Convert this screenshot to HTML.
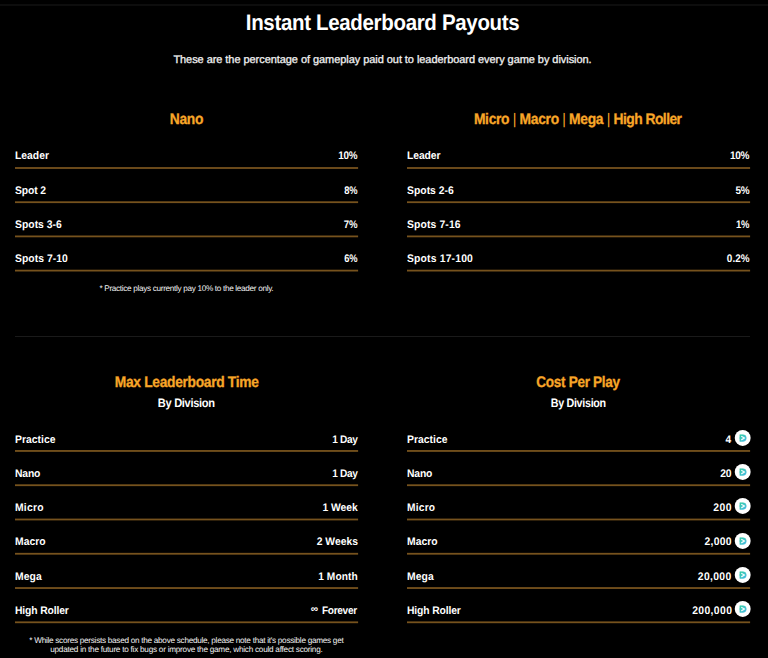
<!DOCTYPE html>
<html lang="en">
<head>
<meta charset="utf-8">
<title>Instant Leaderboard Payouts</title>
<style>
html,body{margin:0;padding:0;background:#000;}
body{width:768px;height:658px;overflow:hidden;position:relative;color:#fff;
  font-family:"Liberation Sans",Arial,sans-serif;text-rendering:geometricPrecision;}
span{white-space:nowrap;}
.topline{position:absolute;left:0;top:4px;width:768px;height:2px;background:#0d0d0d;}
.c{position:absolute;margin:0;text-align:center;white-space:nowrap;}
.full{left:0;width:765px;}
.cl{left:15px;width:343px;}
.cr{left:407px;width:343px;}
h1.c{top:9.8px;font-size:22.4px;line-height:26px;font-weight:bold;}
.sub{top:53.3px;font-size:11px;line-height:14px;color:#f0f0f0;-webkit-text-stroke:0.3px #f0f0f0;}
h2.c{color:#f8a628;-webkit-text-stroke:0.3px #f8a628;text-rendering:geometricPrecision;font-size:15.3px;line-height:18px;font-weight:bold;}
h3.c{color:#fff;font-size:12.2px;line-height:16px;font-weight:bold;}
.tbl{position:absolute;width:343px;list-style:none;margin:0;padding:0;}
.tbl li{display:flex;justify-content:space-between;align-items:flex-start;box-sizing:border-box;height:34.25px;padding-top:15.9px;border-bottom:2px solid transparent;font-size:11px;line-height:13px;font-weight:bold;}
.tbl .v{display:flex;align-items:flex-start;}
.hrl{letter-spacing:-0.6px;}
.pp{font-weight:normal;-webkit-text-stroke:0;position:relative;top:-0.5px;}
.inf{display:inline-block;font-size:10px;font-weight:bold;margin:-2.1px 0.8px 0 0;}
.coin{display:block;margin:-3.75px -2px 0 3px;flex:none;}
.note{font-size:8.2px;line-height:10px;color:#f2f2f2;text-rendering:geometricPrecision;}
.lines{position:absolute;left:0;top:0;fill:#76521d;pointer-events:none;}
.hr{position:absolute;left:15px;top:336px;width:735px;height:1px;background:#1a1a1a;}
</style>
</head>
<body>
<svg width="0" height="0" style="position:absolute"><defs><linearGradient id="cg" gradientUnits="userSpaceOnUse" x1="9" y1="9" x2="24" y2="23"><stop offset="0" stop-color="#32cf9f"/><stop offset="1" stop-color="#4ab8ea"/></linearGradient></defs></svg>
<div class="topline"></div>
<h1 class="c full"><span id="t41" style="letter-spacing:-0.350px;margin-right:0.350px;display:inline-block;transform:scaleX(0.9147);transform-origin:center center">Instant Leaderboard Payouts</span></h1>
<p class="c full sub"><span id="t42" style="letter-spacing:-0.059px;margin-right:0.059px">These are the percentage of gameplay paid out to leaderboard every game by division.</span></p>

<h2 class="c cl" style="top:111.4px"><span id="t43" style="letter-spacing:-0.350px;margin-right:0.350px;display:inline-block;transform:scaleX(0.9020);transform-origin:center center">Nano</span></h2>
<ul class="tbl nano" style="left:15px;top:134.40px">
<li><span id="t0" class="k" style="letter-spacing:0.013px;margin-right:-0.013px;display:inline-block;transform:scaleX(0.9400);transform-origin:left center">Leader</span><span class="v"><span id="t1" class="n" style="letter-spacing:-0.350px;margin-right:0.350px;display:inline-block;transform:translateX(-0.84px) scaleX(0.8987);transform-origin:right center">10%</span></span></li>
<li><span id="t2" class="k" style="letter-spacing:-0.119px;margin-right:0.119px;display:inline-block;transform:scaleX(0.9400);transform-origin:left center">Spot 2</span><span class="v"><span id="t3" class="n" style="letter-spacing:-0.350px;margin-right:0.350px;display:inline-block;transform:scaleX(0.8479);transform-origin:right center">8%</span></span></li>
<li><span id="t4" class="k" style="letter-spacing:0.040px;margin-right:-0.040px;display:inline-block;transform:scaleX(0.9400);transform-origin:left center">Spots 3-6</span><span class="v"><span id="t5" class="n" style="letter-spacing:-0.350px;margin-right:0.350px;display:inline-block;transform:scaleX(0.8771);transform-origin:right center">7%</span></span></li>
<li><span id="t6" class="k" style="letter-spacing:0.054px;margin-right:-0.054px;display:inline-block;transform:scaleX(0.9400);transform-origin:left center">Spots 7-10</span><span class="v"><span id="t7" class="n" style="letter-spacing:-0.350px;margin-right:0.350px;display:inline-block;transform:scaleX(0.8479);transform-origin:right center">6%</span></span></li>
</ul>
<p class="c cl note" style="top:283.7px"><span id="t49" style="letter-spacing:-0.317px;margin-right:0.317px">* Practice plays currently pay 10% to the leader only.</span></p>

<h2 class="c cr" style="top:111.4px"><span id="t44" style="letter-spacing:-0.350px;margin-right:0.350px;display:inline-block;transform:translateX(-1.00px) scaleX(0.9050);transform-origin:center center">Micro <span class="pp">|</span> Macro <span class="pp">|</span> Mega <span class="pp">|</span> <span class="hrl">High Roller</span></span></h2>
<ul class="tbl micro" style="left:407px;top:134.40px">
<li><span id="t8" class="k" style="letter-spacing:-0.094px;margin-right:0.094px;display:inline-block;transform:scaleX(0.9400);transform-origin:left center">Leader</span><span class="v"><span id="t9" class="n" style="letter-spacing:-0.309px;margin-right:0.309px;display:inline-block;transform:translateX(-0.84px) scaleX(0.9131);transform-origin:right center">10%</span></span></li>
<li><span id="t10" class="k" style="letter-spacing:0.040px;margin-right:-0.040px;display:inline-block;transform:scaleX(0.9400);transform-origin:left center">Spots 2-6</span><span class="v"><span id="t11" class="n" style="letter-spacing:-0.350px;margin-right:0.350px;display:inline-block;transform:scaleX(0.9073);transform-origin:right center">5%</span></span></li>
<li><span id="t12" class="k" style="letter-spacing:0.149px;margin-right:-0.149px;display:inline-block;transform:scaleX(0.9400);transform-origin:left center">Spots 7-16</span><span class="v"><span id="t13" class="n" style="letter-spacing:-0.350px;margin-right:0.350px;display:inline-block;transform:scaleX(0.8626);transform-origin:right center">1%</span></span></li>
<li><span id="t14" class="k" style="letter-spacing:0.201px;margin-right:-0.201px;display:inline-block;transform:scaleX(0.9400);transform-origin:left center">Spots 17-100</span><span class="v"><span id="t15" class="n" style="letter-spacing:0.071px;margin-right:-0.071px;display:inline-block;transform:translateX(-0.68px) scaleX(0.9024);transform-origin:right center">0.2%</span></span></li>
</ul>

<div class="hr"></div>
<svg class="lines" width="768" height="658" viewBox="0 0 768 658" aria-hidden="true"><rect x="15" y="167.10" width="343.1" height="1.8"/><rect x="15" y="201.30" width="343.1" height="1.8"/><rect x="15" y="235.50" width="343.1" height="1.8"/><rect x="15" y="269.70" width="343.1" height="1.8"/><rect x="15" y="450.05" width="343.1" height="1.8"/><rect x="15" y="484.32" width="343.1" height="1.8"/><rect x="15" y="518.59" width="343.1" height="1.8"/><rect x="15" y="552.86" width="343.1" height="1.8"/><rect x="15" y="587.13" width="343.1" height="1.8"/><rect x="15" y="621.40" width="343.1" height="1.8"/><rect x="407" y="167.10" width="343.1" height="1.8"/><rect x="407" y="201.30" width="343.1" height="1.8"/><rect x="407" y="235.50" width="343.1" height="1.8"/><rect x="407" y="269.70" width="343.1" height="1.8"/><rect x="407" y="450.05" width="343.1" height="1.8"/><rect x="407" y="484.32" width="343.1" height="1.8"/><rect x="407" y="518.59" width="343.1" height="1.8"/><rect x="407" y="552.86" width="343.1" height="1.8"/><rect x="407" y="587.13" width="343.1" height="1.8"/><rect x="407" y="621.40" width="343.1" height="1.8"/></svg>

<h2 class="c cl" style="top:373.8px"><span id="t45" style="letter-spacing:-0.350px;margin-right:0.350px;display:inline-block;transform:scaleX(0.9018);transform-origin:center center">Max Leaderboard Time</span></h2>
<h3 class="c cl" style="top:395.3px"><span id="t46" style="letter-spacing:-0.350px;margin-right:0.350px;display:inline-block;transform:scaleX(0.9092);transform-origin:center center">By Division</span></h3>
<ul class="tbl time" style="left:15px;top:417.85px">
<li><span id="t16" class="k" style="letter-spacing:0.043px;margin-right:-0.043px;display:inline-block;transform:scaleX(0.9400);transform-origin:left center">Practice</span><span class="v"><span id="t17" class="n" style="letter-spacing:-0.350px;margin-right:0.350px;display:inline-block;transform:scaleX(0.9196);transform-origin:right center">1 Day</span></span></li>
<li><span id="t18" class="k" style="letter-spacing:-0.149px;margin-right:0.149px;display:inline-block;transform:scaleX(0.9400);transform-origin:left center">Nano</span><span class="v"><span id="t19" class="n" style="letter-spacing:-0.350px;margin-right:0.350px;display:inline-block;transform:scaleX(0.9196);transform-origin:right center">1 Day</span></span></li>
<li><span id="t20" class="k" style="letter-spacing:0.250px;margin-right:-0.250px;display:inline-block;transform:scaleX(0.9400);transform-origin:left center">Micro</span><span class="v"><span id="t21" class="n" style="letter-spacing:-0.068px;margin-right:0.068px;display:inline-block;transform:translateX(-0.64px) scaleX(0.9400);transform-origin:right center">1 Week</span></span></li>
<li><span id="t22" class="k" style="letter-spacing:0.048px;margin-right:-0.048px;display:inline-block;transform:scaleX(0.9400);transform-origin:left center">Macro</span><span class="v"><span id="t23" class="n" style="letter-spacing:0.043px;margin-right:-0.043px;display:inline-block;transform:scaleX(0.9400);transform-origin:right center">2 Weeks</span></span></li>
<li><span id="t24" class="k" style="letter-spacing:0.121px;margin-right:-0.121px;display:inline-block;transform:scaleX(0.9400);transform-origin:left center">Mega</span><span class="v"><span id="t25" class="n" style="letter-spacing:0.110px;margin-right:-0.110px;display:inline-block;transform:scaleX(0.9262);transform-origin:right center">1 Month</span></span></li>
<li><span id="t26" class="k" style="letter-spacing:-0.134px;margin-right:0.134px;display:inline-block;transform:scaleX(0.9400);transform-origin:left center">High Roller</span><span class="v"><span id="t27" class="inf" style="display:inline-block;transform:translateX(-0.96px) scaleX(1.0286);transform-origin:right center">∞</span><span id="t28" class="n" style="letter-spacing:-0.350px;margin-right:0.350px;display:inline-block;transform:translateX(-1.12px) scaleX(0.9173);transform-origin:right center">Forever</span></span></li>
</ul>
<p class="c cl note" style="top:635.7px"><span id="t50" style="letter-spacing:-0.275px;margin-right:0.275px">* While scores persists based on the above schedule, please note that it's possible games get</span></p>
<p class="c cl note" style="top:644.9px"><span id="t51" style="letter-spacing:-0.247px;margin-right:0.247px">updated in the future to fix bugs or improve the game, which could affect scoring.</span></p>

<h2 class="c cr" style="top:373.8px"><span id="t47" style="letter-spacing:-0.350px;margin-right:0.350px;display:inline-block;transform:scaleX(0.8870);transform-origin:center center">Cost Per Play</span></h2>
<h3 class="c cr" style="top:395.3px"><span id="t48" style="letter-spacing:-0.350px;margin-right:0.350px;display:inline-block;transform:scaleX(0.8822);transform-origin:center center">By Division</span></h3>
<ul class="tbl cost" style="left:407px;top:417.85px">
<li><span id="t29" class="k" style="letter-spacing:0.043px;margin-right:-0.043px;display:inline-block;transform:scaleX(0.9400);transform-origin:left center">Practice</span><span class="v"><span id="t30" class="n" style="display:inline-block;transform:scaleX(0.9286);transform-origin:right center">4</span><svg class="coin" viewBox="0 0 36 32" width="18" height="16" aria-hidden="true"><g transform="translate(1.4 -0.1)"><circle cx="16" cy="16" r="15.9" fill="#fff"/><path d="M10.3 9.5h6.2a6.7 6.7 0 0 1 0 13.4h-6.2v-5.2l-1-1.5 1-1.5z" fill="url(#cg)" stroke="url(#cg)" stroke-width="1" stroke-linejoin="round"/><path d="M14 13l5.6 3.2-5.6 3.2" fill="none" stroke="#fff" stroke-width="2.6" stroke-linejoin="round" stroke-linecap="round" opacity=".92"/></g></svg></span></li>
<li><span id="t31" class="k" style="letter-spacing:-0.149px;margin-right:0.149px;display:inline-block;transform:scaleX(0.9400);transform-origin:left center">Nano</span><span class="v"><span id="t32" class="n" style="letter-spacing:-0.234px;margin-right:0.234px;display:inline-block;transform:translateX(0.56px) scaleX(0.9400);transform-origin:right center">20</span><svg class="coin" viewBox="0 0 36 32" width="18" height="16" aria-hidden="true"><g transform="translate(1.4 -0.1)"><circle cx="16" cy="16" r="15.9" fill="#fff"/><path d="M10.3 9.5h6.2a6.7 6.7 0 0 1 0 13.4h-6.2v-5.2l-1-1.5 1-1.5z" fill="url(#cg)" stroke="url(#cg)" stroke-width="1" stroke-linejoin="round"/><path d="M14 13l5.6 3.2-5.6 3.2" fill="none" stroke="#fff" stroke-width="2.6" stroke-linejoin="round" stroke-linecap="round" opacity=".92"/></g></svg></span></li>
<li><span id="t33" class="k" style="letter-spacing:0.250px;margin-right:-0.250px;display:inline-block;transform:scaleX(0.9238);transform-origin:left center">Micro</span><span class="v"><span id="t34" class="n" style="letter-spacing:0.500px;margin-right:-0.500px;display:inline-block;transform:scaleX(0.9400);transform-origin:right center">200</span><svg class="coin" viewBox="0 0 36 32" width="18" height="16" aria-hidden="true"><g transform="translate(1.4 -0.1)"><circle cx="16" cy="16" r="15.9" fill="#fff"/><path d="M10.3 9.5h6.2a6.7 6.7 0 0 1 0 13.4h-6.2v-5.2l-1-1.5 1-1.5z" fill="url(#cg)" stroke="url(#cg)" stroke-width="1" stroke-linejoin="round"/><path d="M14 13l5.6 3.2-5.6 3.2" fill="none" stroke="#fff" stroke-width="2.6" stroke-linejoin="round" stroke-linecap="round" opacity=".92"/></g></svg></span></li>
<li><span id="t35" class="k" style="letter-spacing:0.048px;margin-right:-0.048px;display:inline-block;transform:scaleX(0.9400);transform-origin:left center">Macro</span><span class="v"><span id="t36" class="n" style="letter-spacing:0.287px;margin-right:-0.287px;display:inline-block;transform:translateX(0.80px) scaleX(0.9400);transform-origin:right center">2,000</span><svg class="coin" viewBox="0 0 36 32" width="18" height="16" aria-hidden="true"><g transform="translate(1.4 -0.1)"><circle cx="16" cy="16" r="15.9" fill="#fff"/><path d="M10.3 9.5h6.2a6.7 6.7 0 0 1 0 13.4h-6.2v-5.2l-1-1.5 1-1.5z" fill="url(#cg)" stroke="url(#cg)" stroke-width="1" stroke-linejoin="round"/><path d="M14 13l5.6 3.2-5.6 3.2" fill="none" stroke="#fff" stroke-width="2.6" stroke-linejoin="round" stroke-linecap="round" opacity=".92"/></g></svg></span></li>
<li><span id="t37" class="k" style="letter-spacing:0.121px;margin-right:-0.121px;display:inline-block;transform:scaleX(0.9400);transform-origin:left center">Mega</span><span class="v"><span id="t38" class="n" style="letter-spacing:0.370px;margin-right:-0.370px;display:inline-block;transform:translateX(0.68px) scaleX(0.9400);transform-origin:right center">20,000</span><svg class="coin" viewBox="0 0 36 32" width="18" height="16" aria-hidden="true"><g transform="translate(1.4 -0.1)"><circle cx="16" cy="16" r="15.9" fill="#fff"/><path d="M10.3 9.5h6.2a6.7 6.7 0 0 1 0 13.4h-6.2v-5.2l-1-1.5 1-1.5z" fill="url(#cg)" stroke="url(#cg)" stroke-width="1" stroke-linejoin="round"/><path d="M14 13l5.6 3.2-5.6 3.2" fill="none" stroke="#fff" stroke-width="2.6" stroke-linejoin="round" stroke-linecap="round" opacity=".92"/></g></svg></span></li>
<li><span id="t39" class="k" style="letter-spacing:-0.134px;margin-right:0.134px;display:inline-block;transform:scaleX(0.9400);transform-origin:left center">High Roller</span><span class="v"><span id="t40" class="n" style="letter-spacing:0.426px;margin-right:-0.426px;display:inline-block;transform:translateX(0.56px) scaleX(0.9400);transform-origin:right center">200,000</span><svg class="coin" viewBox="0 0 36 32" width="18" height="16" aria-hidden="true"><g transform="translate(1.4 -0.1)"><circle cx="16" cy="16" r="15.9" fill="#fff"/><path d="M10.3 9.5h6.2a6.7 6.7 0 0 1 0 13.4h-6.2v-5.2l-1-1.5 1-1.5z" fill="url(#cg)" stroke="url(#cg)" stroke-width="1" stroke-linejoin="round"/><path d="M14 13l5.6 3.2-5.6 3.2" fill="none" stroke="#fff" stroke-width="2.6" stroke-linejoin="round" stroke-linecap="round" opacity=".92"/></g></svg></span></li>
</ul>
</body>
</html>
